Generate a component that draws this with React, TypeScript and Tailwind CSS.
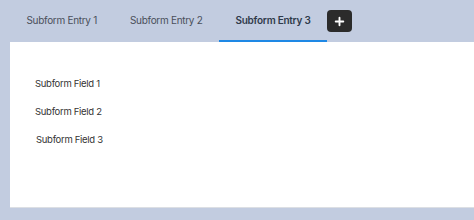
import { Plus } from 'lucide-react';

const tabs = ['Subform Entry 1', 'Subform Entry 2', 'Subform Entry 3'];
const fields = ['Subform Field 1', 'Subform Field 2', 'Subform Field 3'];

export default function App() {
  const active = 2;
  return (
    <div
      className="w-[474px] h-[220px] bg-[#c2cce0] pl-[10px] pb-[12px] flex flex-col"
      style={{ fontFamily: 'Inter, "Noto Sans", sans-serif' }}
    >
      {/* Tab bar */}
      <div className="flex items-end h-[42px]">
        {tabs.map((t, i) => (
          <div
            key={t}
            className={`h-[42px] px-[16.5px] flex items-center text-[10px] border-b-2 ${
              i === active
                ? 'font-semibold text-[#2f3a4a] border-[#1e88e5] tracking-[-0.25px]'
                : 'text-[#4a4f5a] border-transparent tracking-[-0.3px]'
            }`}
          >
            <span className="pt-[1px]">{t}</span>
          </div>
        ))}
        <div className="h-[42px] flex items-center">
          <button className="w-[25px] h-[22px] rounded-[4px] bg-[#2b2b2b] text-white flex items-center justify-center">
            <Plus size={13} strokeWidth={3.5} />
          </button>
        </div>
      </div>

      {/* Panel */}
      <div className="flex-1 bg-white border-b border-[#dcdfe4] pt-[35px] pl-[25px] flex flex-col gap-[15px]">
        {fields.map((f, i) => (
          <div key={f} className="text-[9.5px] tracking-[-0.3px] text-[#333] leading-[13px]" style={{ paddingLeft: i === 2 ? 1 : 0 }}>
            {f}
          </div>
        ))}
      </div>
    </div>
  );
}
